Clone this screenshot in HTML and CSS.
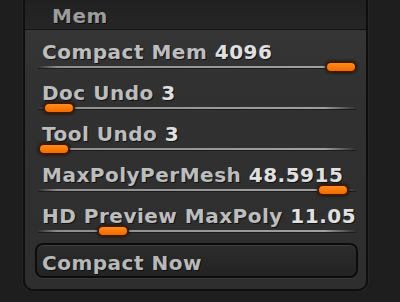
FILE: index.html
```html
<!DOCTYPE html>
<html lang="en">
<head>
    <meta charset="UTF-8">
    <meta name="viewport" content="width=device-width, initial-scale=1.0">
    <title>Mem</title>
    <link rel="stylesheet" href="styles.css">
</head>
<body>
    <div class="panel">
        <div class="panel-head">Mem</div>

        <div class="panel-body">
            <div class="row">
                <div class="label">Compact Mem <span class="value">4096</span></div>
                <div class="slider"><div class="track"></div><div class="knob" style="left: 287px;"></div></div>
            </div>
            <div class="row">
                <div class="label">Doc Undo <span class="value">3</span></div>
                <div class="slider"><div class="track"></div><div class="knob" style="left: 5px;"></div></div>
            </div>
            <div class="row">
                <div class="label">Tool Undo <span class="value">3</span></div>
                <div class="slider"><div class="track"></div><div class="knob" style="left: 0px;"></div></div>
            </div>
            <div class="row">
                <div class="label">MaxPolyPerMesh <span class="value">48.5915</span></div>
                <div class="slider"><div class="track"></div><div class="knob" style="left: 279px;"></div></div>
            </div>
            <div class="row">
                <div class="label">HD Preview MaxPoly <span class="value">11.05</span></div>
                <div class="slider"><div class="track"></div><div class="knob" style="left: 59px;"></div></div>
            </div>

            <button class="compact-btn">Compact Now</button>
        </div>
    </div>
</body>
</html>
```

FILE: styles.css
```css
/* Base */
* {
    margin: 0;
    padding: 0;
    box-sizing: border-box;
}

body {
    background: #1e1e1e;
    font-family: 'DejaVu Sans', Verdana, sans-serif;
    font-weight: bold;
    font-size: 20px;
    letter-spacing: 0.5px;
    overflow: hidden;
}

/* Panel */
.panel {
    width: 345px;
    margin: -8px 0 0 23px;
    border: 2px solid #0e0e0e;
    border-radius: 10px;
    background: linear-gradient(#383838 0%, #313131 30%, #2e2e2e 100%);
    overflow: hidden;
    box-shadow: 0 0 0 1px #262626;
}

.panel-head {
    height: 36px;
    padding: 11px 0 0 27px;
    line-height: 22px;
    color: #9c9c9c;
    background: linear-gradient(#1f1f1f, #262626);
    border-bottom: 1px solid #141414;
    text-shadow: 1px 1px 0 #0c0c0c;
}

.panel-body {
    padding: 11px 10px 11px 17px;
}

/* Slider rows */
.row {
    height: 41px;
}

.label {
    line-height: 22px;
    color: #bdbdbd;
    white-space: nowrap;
    text-shadow: 1px 1px 0 #121212;
}

.label .value {
    color: #e0e0e0;
}

.slider {
    position: relative;
    width: 318px;
    height: 12px;
    margin: -2px 0 0 -4px;
    display: flex;
    align-items: center;
}

.track {
    width: 100%;
    height: 2px;
    background: linear-gradient(to right, rgba(140,140,140,0) 0%, #8e8e8e 6%, #a0a0a0 90%, rgba(140,140,140,0) 100%);
    box-shadow: 0 1px 0 #1c1c1c;
}

.knob {
    position: absolute;
    top: 0;
    width: 32px;
    height: 12px;
    border: 2px solid #3e1a00;
    border-radius: 6px;
    background: linear-gradient(#ff8c1c, #f26a00);
    box-shadow: 0 0 3px rgba(0,0,0,0.7);
}

/* Button */
.compact-btn {
    display: block;
    width: 323px;
    height: 35px;
    margin: -3px 0 0 -7px;
    padding: 4px 0 0 5px;
    text-align: left;
    font: inherit;
    letter-spacing: inherit;
    line-height: 22px;
    color: #b8b8b8;
    background: linear-gradient(#2c2c2c, #232323);
    border: 2px solid #0c0c0c;
    border-radius: 8px;
    box-shadow: inset 0 1px 0 #3e3e3e, 0 1px 0 #3a3a3a;
    text-shadow: 1px 1px 0 #0e0e0e;
}
```
